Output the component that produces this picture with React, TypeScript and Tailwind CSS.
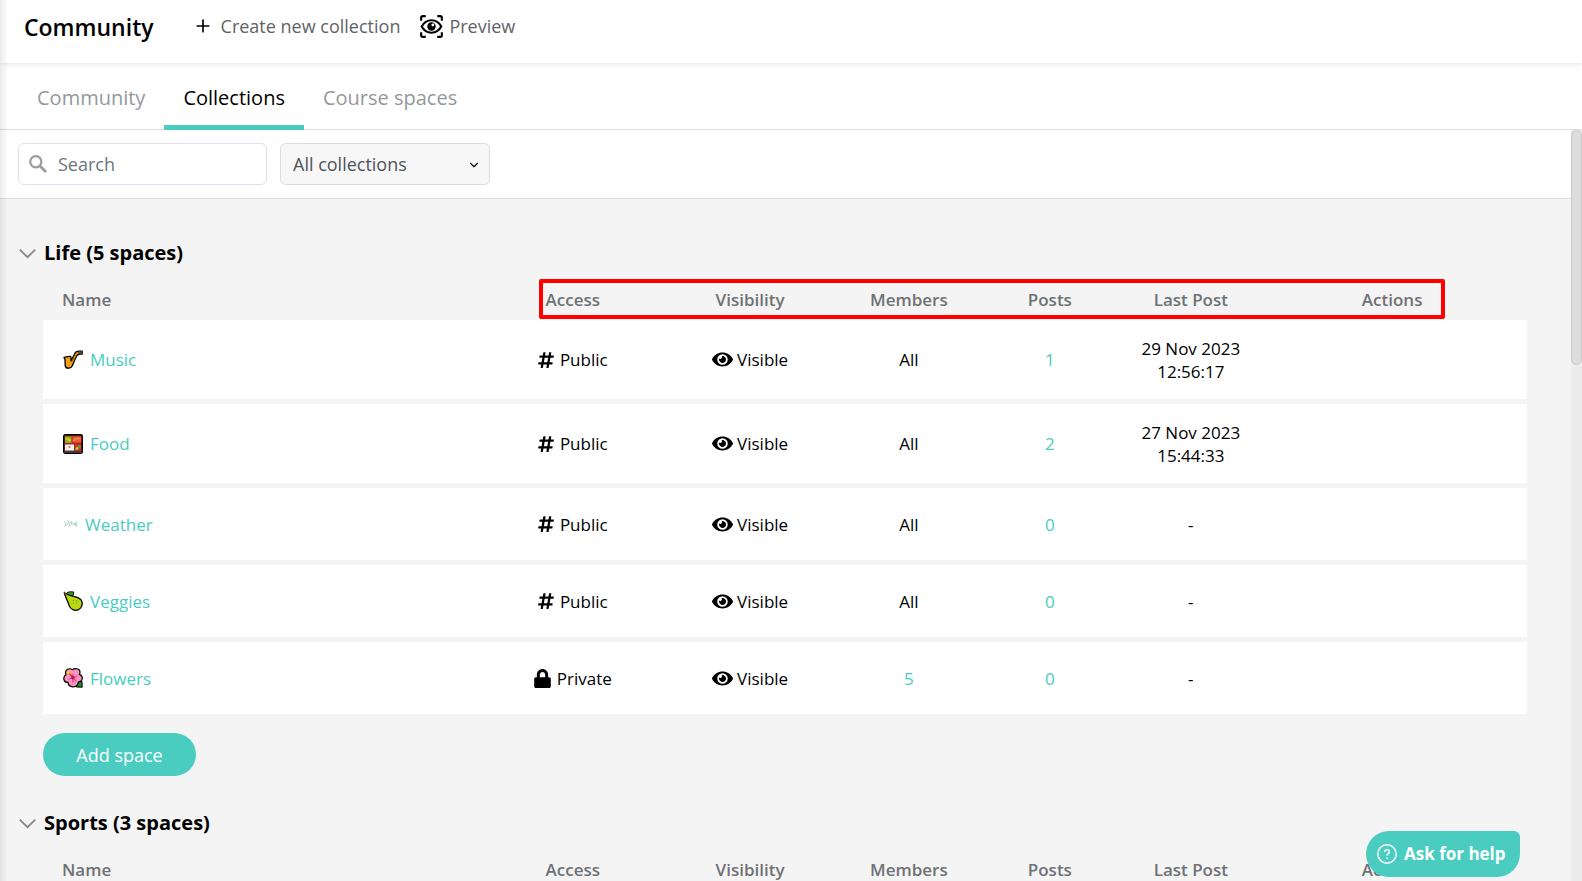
import { useState } from "react";
import type { ReactNode } from "react";
import { ChevronDown, Plus } from "lucide-react";
import { FaEye, FaHashtag, FaLock } from "react-icons/fa";

type Space = {
  name: string;
  icon: ReactNode;
  access: "Public" | "Private";
  members: string;
  posts: number;
  lastPost?: [string, string];
};

function SaxIcon() {
  return (
    <svg viewBox="0 0 20 20" className="h-5 w-5 shrink-0">
      <path
        d="M1 7.6 C2 6.8 5 6.6 7.4 6.4 C8.2 6.6 8.2 7.4 8 9 L8 10.8 L11.6 4 C12.4 2 14 1.2 16 1.2 L19.2 1.2 L19.2 4 L16.4 4 C14.6 4.2 13.8 5.4 13.2 6.8 L9.4 15.6 C8 19 2.8 19.2 2.2 15.6 L2 9.4 Z"
        fill="#f1a10b"
        stroke="#000"
        strokeWidth="1.3"
        strokeLinejoin="round"
      />
      <path d="M14.6 1.8 L19 1.6 L19 3.6 L15.4 3.4 Z" fill="#4a4a4a" />
      <path d="M11 8 L8.6 11.6" stroke="#7a5200" strokeWidth="1" />
    </svg>
  );
}

function BentoIcon() {
  return (
    <svg viewBox="0 0 20 20" className="h-5 w-5 shrink-0">
      <rect x="0.7" y="0.7" width="18.6" height="18.6" rx="1.6" fill="#a3272b" stroke="#000" strokeWidth="1.4" />
      <rect x="2" y="2.5" width="6.5" height="6.5" fill="#7fae22" />
      <circle cx="4" cy="5" r="1.4" fill="#b1cc33" />
      <circle cx="6.4" cy="6" r="1.5" fill="#fcc21b" />
      <rect x="9.5" y="2.5" width="8.6" height="6" fill="#ee5a2a" />
      <path d="M10.4 6.6 L13 4.8 L17.5 4.4" stroke="#f5997c" strokeWidth="1" fill="none" />
      <rect x="2" y="10.5" width="9" height="6" fill="#f2f2f2" />
      <circle cx="6.5" cy="13" r="1" fill="#ea5a47" />
      <rect x="12" y="10.5" width="6" height="6" fill="#d22f27" />
      <circle cx="14" cy="14.5" r="1.6" fill="#b1cc33" />
      <circle cx="16.2" cy="12.6" r="1.6" fill="#5c9e31" />
      <rect x="1.4" y="17" width="17.2" height="1.8" fill="#3f3f3f" />
    </svg>
  );
}

function WindIcon() {
  return (
    <svg viewBox="0 0 16 10" className="h-[10px] w-[15px] shrink-0" fill="none" stroke="#b4c6c2">
      <path d="M1 2 L3 4 L2 8 M4 2 C6 0 7 3 5 5 L3 7 M6 8 L8 3 C9 1 10 3 9 5 M8 7 L10 5" />
      <path d="M10 4 L12 6 L15 2 M12 4 L15 8 M14 3 L14 7" stroke="#8fd3cb" />
    </svg>
  );
}

function PearIcon() {
  return (
    <svg viewBox="0 0 20 20" className="h-5 w-5 shrink-0">
      <path
        d="M1.4 2.6 C3 2 5 3 7 4.4 C10 5.4 15 5.4 18 8.8 C20.4 12 19 17 15.6 18.6 C11.6 20.4 7.4 18.4 6.2 14.6 C5.4 11.6 3.6 8.6 2.8 6 Z"
        fill="#b8d70f"
        stroke="#000"
        strokeWidth="1.3"
        strokeLinejoin="round"
      />
      <path d="M5 1.2 C7 0.6 9 0.8 10.8 1 L10.2 4.2 C8 4.8 5.6 4.4 3.4 2.4 Z" fill="#3f9a1f" stroke="#000" strokeWidth="0.9" />
      <path d="M1 0.8 L3.4 4.4" stroke="#6b3a1c" strokeWidth="1.4" />
      <path d="M10.6 9 V14 M13.6 9 V14" stroke="#5c9e31" strokeWidth="1" strokeDasharray="1 1.6" />
    </svg>
  );
}

function HibiscusIcon() {
  return (
    <svg viewBox="0 0 20 20" className="h-5 w-5 shrink-0">
      <path d="M12 14 L19 13.4 L19.2 19.2 L13.4 19 Z" fill="#1f8a2c" stroke="#000" strokeWidth="1" />
      <path
        d="M9.5 1.6 C11.4 0 17 0.2 17 4 C17 5 16.8 5.8 16.4 6.4 C20.4 8 20.4 13.4 15.4 14 C14.8 17.2 12.8 19 9.8 18.8 C7 18.6 5.2 17 5 14.4 C0.4 14.6 -0.6 9 3 6.8 C1.2 1.6 5.8 -0.4 9.5 1.6 Z"
        fill="#f892c0"
        stroke="#000"
        strokeWidth="1.2"
      />
      <path d="M9.8 6 V14.6 M5.6 11.2 L14.2 8.2 M7 6.4 L13 13" stroke="#e0408a" strokeWidth="1.2" />
      <circle cx="9.8" cy="9.6" r="1.8" fill="#b5175c" />
      <path d="M5.6 4.2 L9 8.6" stroke="#d22f27" strokeWidth="1.2" />
      <circle cx="5.4" cy="4.2" r="1.7" fill="#fcc21b" />
    </svg>
  );
}

function PreviewIcon() {
  return (
    <svg viewBox="0 0 24 24" className="h-[23px] w-[23px] shrink-0" fill="none" stroke="#000" strokeWidth="2.2">
      <path d="M1.2 6 V3 C1.2 2 2 1.2 3 1.2 H6 M18 1.2 H21 C22 1.2 22.8 2 22.8 3 V6 M22.8 18 V21 C22.8 22 22 22.8 21 22.8 H18 M6 22.8 H3 C2 22.8 1.2 22 1.2 21 V18" />
      <path d="M1.8 12 C6.4 3.4 17.6 3.4 22.2 12 C17.6 20.6 6.4 20.6 1.8 12 Z" />
      <circle cx="12" cy="12" r="4.4" fill="#000" stroke="none" />
      <circle cx="13.4" cy="10.4" r="1.5" fill="#fff" stroke="none" />
    </svg>
  );
}

function SearchIcon() {
  return (
    <svg viewBox="0 0 18 18" className="h-[18px] w-[18px] shrink-0" fill="none" stroke="#9c9c9c">
      <circle cx="6.8" cy="6.8" r="5.6" strokeWidth="2.2" />
      <path d="M11 11 L17 17" strokeWidth="2.8" />
    </svg>
  );
}

const lifeSpaces: Space[] = [
  { name: "Music", icon: <SaxIcon />, access: "Public", members: "All", posts: 1, lastPost: ["29 Nov 2023", "12:56:17"] },
  { name: "Food", icon: <BentoIcon />, access: "Public", members: "All", posts: 2, lastPost: ["27 Nov 2023", "15:44:33"] },
  { name: "Weather", icon: <WindIcon />, access: "Public", members: "All", posts: 0 },
  { name: "Veggies", icon: <PearIcon />, access: "Public", members: "All", posts: 0 },
  { name: "Flowers", icon: <HibiscusIcon />, access: "Private", members: "5", posts: 0 },
];

const tabs = ["Community", "Collections", "Course spaces"];

function SpaceRow({ space }: { space: Space }) {
  return (
    <tr className={`bg-white ${space.lastPost ? "h-[79px]" : "h-[72px]"}`}>
      <td className="pl-5">
        <a href="#" className="flex items-center gap-[7px] text-[#4accc1]">
          {space.icon}
          {space.name}
        </a>
      </td>
      <td>
        <div className="flex items-center justify-center gap-[6px]">
          {space.access === "Public" ? <FaHashtag className="h-[18px] w-4" /> : <FaLock className="h-[19px] w-[17px]" />}
          {space.access}
        </div>
      </td>
      <td>
        <div className="flex items-center justify-center gap-1">
          <FaEye className="h-[19px] w-[21px]" />
          Visible
        </div>
      </td>
      <td className="text-center">
        {space.members === "All" ? "All" : <a href="#" className="text-[#4accc1]">{space.members}</a>}
      </td>
      <td className="text-center">
        <a href="#" className="text-[#4accc1]">{space.posts}</a>
      </td>
      <td className="text-center">
        {space.lastPost ? (
          <>
            {space.lastPost[0]}
            <br />
            {space.lastPost[1]}
          </>
        ) : (
          "-"
        )}
      </td>
      <td></td>
    </tr>
  );
}

function Collection({ title, spaces, highlighted }: { title: string; spaces: Space[]; highlighted?: boolean }) {
  return (
    <section className="mb-[27px]">
      <h2>
        <button type="button" className="flex h-10 items-center gap-2 pl-[19px] text-xl font-bold">
          <svg viewBox="0 0 17 17" className="h-[17px] w-[17px]" fill="none" stroke="#85888b" strokeWidth="1.8">
            <path d="M0.8 4.6 L8.5 12.2 L16.2 4.6" />
          </svg>
          {title}
        </button>
      </h2>
      <div className="relative mt-[5px] ml-[43px] mr-11">
        <table className="w-full table-fixed border-separate border-spacing-x-0 border-spacing-y-[5px] text-[17px] leading-[23px]">
          <thead>
            <tr className="h-8 text-[#6f7174] [&>th]:font-semibold">
              <th className="w-[29.7%] pl-[19px] text-left">Name</th>
              <th className="w-[12%]">Access</th>
              <th className="w-[11.9%]">Visibility</th>
              <th className="w-[9.5%]">Members</th>
              <th className="w-[9.5%]">Posts</th>
              <th className="w-[9.5%]">Last Post</th>
              <th className="pr-1">Actions</th>
            </tr>
          </thead>
          <tbody>
            {spaces.map((space) => (
              <SpaceRow key={space.name} space={space} />
            ))}
          </tbody>
        </table>
        {highlighted && (
          <div className="absolute top-px left-[33.4%] h-10 w-[61.1%] rounded-xs border-4 border-[#ff0000]" />
        )}
      </div>
      <button type="button" className="mt-[14px] ml-[43px] h-[43px] w-[153px] rounded-full bg-[#4accc1] text-lg text-white">
        Add space
      </button>
    </section>
  );
}

export default function App() {
  const [activeTab, setActiveTab] = useState("Collections");

  return (
    <div className="relative flex h-screen flex-col overflow-hidden bg-white font-['Open_Sans','Noto_Sans',sans-serif] text-black">
      <header className="z-10 flex h-[63px] shrink-0 items-center bg-white pb-[9px] pl-6 shadow-[0_1px_5px_rgba(0,0,0,0.12)]">
        <h1 className="text-[23px] font-semibold">Community</h1>
        <div className="ml-[39px] flex items-center gap-5 pb-0.5 text-lg text-[#5f6265]">
          <button type="button" className="flex items-center gap-2">
            <Plus className="h-5 w-5 text-black" />
            Create new collection
          </button>
          <button type="button" className="flex items-center gap-[6px]">
            <PreviewIcon />
            Preview
          </button>
        </div>
      </header>

      <nav className="flex h-[67px] shrink-0 border-b border-[#e0e0e0] pl-[18px] text-xl">
        {tabs.map((tab) => (
          <button
            key={tab}
            type="button"
            onClick={() => setActiveTab(tab)}
            className={`-mb-px border-b-[5px] px-[19px] pt-2 ${
              tab === activeTab ? "border-[#4accc1] text-black" : "border-transparent text-[#94989c]"
            }`}
          >
            {tab}
          </button>
        ))}
      </nav>

      <div className="flex min-h-0 flex-1">
        <main className="min-w-0 flex-1 overflow-hidden bg-[#f4f4f4]">
          <div className="flex h-[69px] items-center gap-[13px] border-b border-[#dedede] bg-white pl-[18px]">
            <label className="flex h-[42px] w-[249px] items-center gap-[11px] rounded-md border border-[#e0e0f2] bg-white pl-[10px]">
              <SearchIcon />
              <input
                type="search"
                aria-label="Search"
                placeholder="Search"
                className="w-full min-w-0 bg-transparent text-lg outline-none placeholder:text-[#6c757d]"
              />
            </label>
            <div className="relative">
              <select
                aria-label="Collections filter"
                className="h-[42px] w-[210px] appearance-none rounded-md border border-[#dcdcdc] bg-[#f7f7f7] pl-3 text-lg text-[#4f5357]"
              >
                <option>All collections</option>
              </select>
              <ChevronDown className="pointer-events-none absolute top-[15px] right-[9px] h-[14px] w-[14px]" />
            </div>
          </div>

          <div className="pt-[34px]">
            <Collection title="Life (5 spaces)" spaces={lifeSpaces} highlighted />
            <Collection title="Sports (3 spaces)" spaces={[]} />
          </div>
        </main>
        {/* Scroll track */}
        <div className="w-[11px] shrink-0 bg-[#ececec]">
          <div className="h-[235px] rounded-full border border-[#c9c9c9] bg-[#dcdcdc]" />
        </div>
      </div>

      {/* Shadow cast by the side menu */}
      <div className="pointer-events-none absolute inset-y-0 left-0 z-20 w-2 bg-linear-to-r from-black/8 to-transparent" />

      <button
        type="button"
        className="absolute right-[62px] bottom-1 z-20 flex h-[46px] w-[154px] items-center gap-[7px] rounded-[23px] rounded-tr-md bg-[#4accc1] pl-[11px] text-[17px] font-bold text-white"
      >
        <svg viewBox="0 0 20 20" className="h-5 w-5 shrink-0" fill="none" stroke="currentColor" strokeWidth="1.4">
          <circle cx="10" cy="10" r="9.2" />
          <path d="M7.6 8 C7.6 4.8 12.6 5 12.4 8 C12.3 9.6 10 9.8 10 11.8 M10 13.4 V15" />
        </svg>
        Ask for help
      </button>
    </div>
  );
}
